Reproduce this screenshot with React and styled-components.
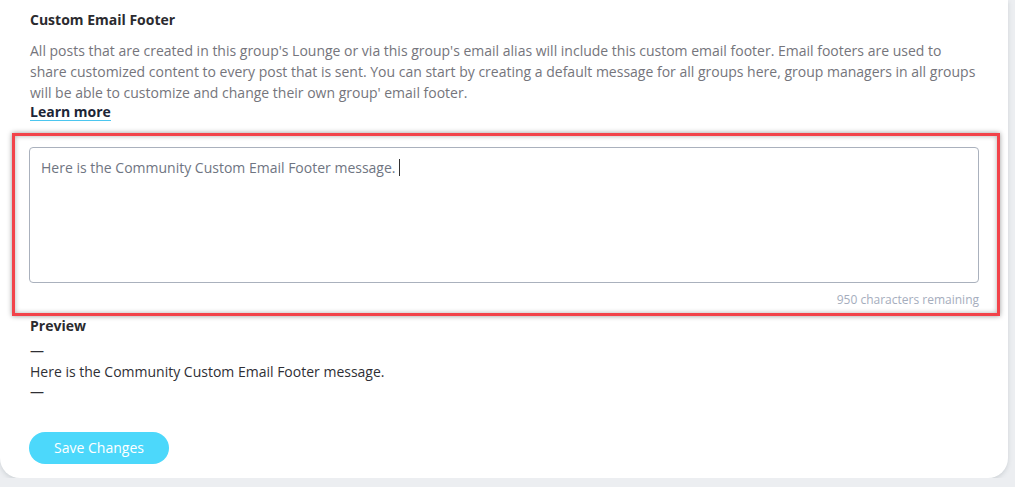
import React from "react";
import styled, { createGlobalStyle } from "styled-components";

const Global = createGlobalStyle`
  html, body { margin: 0; padding: 0; background: #eceef1; }
  body { font-family: "Open Sans", "Noto Sans", Arial, sans-serif; }
  * { box-sizing: border-box; }
`;

const Card = styled.div`
  width: 1008px;
  height: 478px;
  background: #ffffff;
  border-radius: 0 0 20px 20px;
  box-shadow: 0 2px 4px rgba(120, 130, 140, 0.25);
  padding: 10px 29px 0 29px;
  display: flex;
  flex-direction: column;
`;

const Content = styled.div`
  width: 950px;
  display: flex;
  flex-direction: column;
`;

const Title = styled.h3`
  margin: 0 0 0 1px;
  font-size: 14px;
  font-weight: 700;
  color: #2b2b2f;
  line-height: 20px;
`;

const Description = styled.p`
  margin: 10px 0 0 1px;
  font-size: 14px;
  line-height: 21px;
  color: #75757c;
`;

const LearnRow = styled.div`
  margin-left: 1px;
  font-size: 14px;
  line-height: 17px;
`;

const LearnMore = styled.a`
  display: inline-block;
  font-weight: 700;
  color: #1c2536;
  text-decoration: none;
  border-bottom: 1px solid #4cc6ef;
  line-height: 17px;
`;

const Highlight = styled.div`
  margin: 12px -21px 0 -17px;
  border: 3px solid #f2434a;
  box-shadow: 0 0 5px rgba(0, 0, 0, 0.4), inset 0 0 5px rgba(0, 0, 0, 0.3);
  padding: 11px 18px 5px 14px;
  display: flex;
  flex-direction: column;
`;

const TextBox = styled.div`
  height: 136px;
  border: 1px solid #aab1bd;
  border-radius: 4px;
  padding: 10px 11px;
  font-size: 14px;
  line-height: 20px;
  color: #6f7582;
`;

const Caret = styled.span`
  display: inline-block;
  width: 1px;
  height: 17px;
  background: #333;
  vertical-align: -3px;
  margin-left: 3px;
`;

const Counter = styled.div`
  align-self: flex-end;
  margin-top: 9px;
  font-size: 12px;
  line-height: 16px;
  color: #a5adbd;
`;

const PreviewTitle = styled.h4`
  margin: 0 0 0 1px;
  font-size: 14px;
  font-weight: 700;
  color: #2b2b2f;
  line-height: 20px;
`;

const PreviewLine = styled.div`
  margin-left: 1px;
  font-size: 14px;
  line-height: 20.5px;
  color: #2f2f35;
`;

const PreviewBody = styled.div`
  margin-top: 5px;
  display: flex;
  flex-direction: column;
`;

const SaveButton = styled.button`
  margin-top: 29px;
  width: 140px;
  height: 32px;
  border: none;
  border-radius: 16px;
  background: #4cd8fb;
  color: #ffffff;
  font-family: "Open Sans", Arial, sans-serif;
  font-size: 14px;
  cursor: pointer;
`;

export default function App() {
  return (
    <>
      <Global />
      <Card>
        <Content>
          <Title>Custom Email Footer</Title>
          <Description>
            All posts that are created in this group's Lounge or via this group's email alias will include this
            custom email footer. Email footers are used to share customized content to every post that is sent. You
            can start by creating a default message for all groups here, group managers in all groups will be able
            to customize and change their own group' email footer.
          </Description>
          <LearnRow>
            <LearnMore href="#">Learn more</LearnMore>
          </LearnRow>
          <Highlight>
            <TextBox>
              Here is the Community Custom Email Footer message.
              <Caret />
            </TextBox>
            <Counter>950 characters remaining</Counter>
          </Highlight>
          <PreviewTitle>Preview</PreviewTitle>
          <PreviewBody>
            <PreviewLine>—</PreviewLine>
            <PreviewLine>Here is the Community Custom Email Footer message.</PreviewLine>
            <PreviewLine>—</PreviewLine>
          </PreviewBody>
          <div>
            <SaveButton>Save Changes</SaveButton>
          </div>
        </Content>
      </Card>
    </>
  );
}
